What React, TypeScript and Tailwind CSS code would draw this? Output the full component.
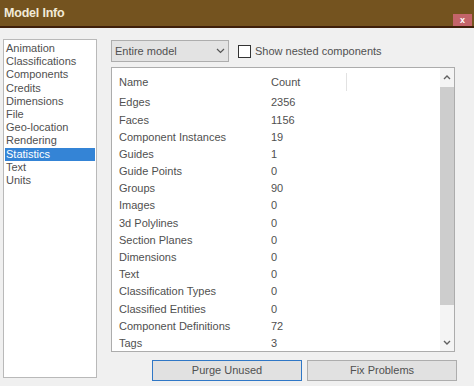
import React from "react";

const items = ["Animation","Classifications","Components","Credits","Dimensions","File","Geo-location","Rendering","Statistics","Text","Units"];
const rows: [string, string][] = [
  ["Edges","2356"],["Faces","1156"],["Component Instances","19"],["Guides","1"],["Guide Points","0"],["Groups","90"],["Images","0"],["3d Polylines","0"],["Section Planes","0"],["Dimensions","0"],["Text","0"],["Classification Types","0"],["Classified Entities","0"],["Component Definitions","72"],["Tags","3"],
];

export default function App() {
  return (
    <div className="w-[474px] h-[386px] bg-[#f0f0f0] overflow-hidden flex flex-col text-[11px] text-[#505050]" style={{ fontFamily: '"Liberation Sans", Arial, sans-serif' }}>
      <div className="h-[26px] bg-[#74531f] flex items-center justify-between pl-[4px] pr-[2px] shrink-0">
        <span className="text-[12.5px] font-bold text-[#f2ead8] tracking-[-0.2px]">Model Info</span>
        <div className="w-[19px] h-[12px] bg-[#c4646a] flex items-center justify-center text-white text-[9px] font-bold mt-[14px] leading-none">x</div>
      </div>
      <div className="h-[2px] bg-[#3e1f0a] shrink-0" />
      <div className="flex flex-1 min-h-0">
        <div className="ml-[3px] mt-[11px] w-[94px] h-[339px] bg-white border border-[#b9b9b9] pt-[2px] pl-[1px] pr-[1px]">
          {items.map((it) => (
            <div key={it} className={"h-[13.2px] leading-[13.2px] pl-[1px] " + (it === "Statistics" ? "bg-[#3484d6] text-white" : "")}>{it}</div>
          ))}
        </div>
        <div className="ml-[14px] mt-[12px] flex flex-col">
          <div className="flex items-center h-[22px]">
            <div className="w-[118px] h-[22px] bg-[#e3e3e3] border border-[#adadad] flex items-center justify-between pl-[3px] pr-[3px]">
              <span>Entire model</span>
              <svg width="9" height="6" viewBox="0 0 9 6"><path d="M1 1 L4.5 4.5 L8 1" fill="none" stroke="#555" strokeWidth="1.2" /></svg>
            </div>
            <div className="ml-[9px] w-[13px] h-[13px] bg-white border border-[#333]" />
            <span className="ml-[4px]">Show nested components</span>
          </div>
          <div className="mt-[5px] w-[344px] h-[285px] bg-white border border-[#acacac] flex">
            <div className="flex-1 pt-[5px]">
              <div className="flex h-[18px] items-center relative">
                <span className="w-[159px] pl-[7px]">Name</span>
                <span>Count</span>
                <div className="absolute left-[234px] top-0 h-[18px] w-px bg-[#e2e2e2]" />
              </div>
              <div className="h-[3px]" />
              {rows.map(([n, c]) => (
                <div key={n} className="flex h-[17.2px] items-center">
                  <span className="w-[159px] pl-[7px]">{n}</span>
                  <span>{c}</span>
                </div>
              ))}
            </div>
            <div className="w-[14px] bg-[#f4f4f4] flex flex-col">
              <div className="h-[19px] flex items-center justify-center">
                <svg width="8" height="5" viewBox="0 0 8 5"><path d="M1 4 L4 1 L7 4" fill="none" stroke="#606060" strokeWidth="1.4" /></svg>
              </div>
              <div className="h-[218px] bg-[#cdcdcd]" />
              <div className="flex-1" />
              <div className="h-[18px] flex items-center justify-center">
                <svg width="8" height="5" viewBox="0 0 8 5"><path d="M1 1 L4 4 L7 1" fill="none" stroke="#606060" strokeWidth="1.4" /></svg>
              </div>
            </div>
          </div>
          <div className="mt-[8px] ml-[41px] flex gap-[5px]">
            <div className="w-[150px] h-[21px] bg-[#e1e1e1] border border-[#2f77c6] flex items-center justify-center">Purge Unused</div>
            <div className="w-[150px] h-[21px] bg-[#e1e1e1] border border-[#adadad] flex items-center justify-center">Fix Problems</div>
          </div>
        </div>
      </div>
    </div>
  );
}
